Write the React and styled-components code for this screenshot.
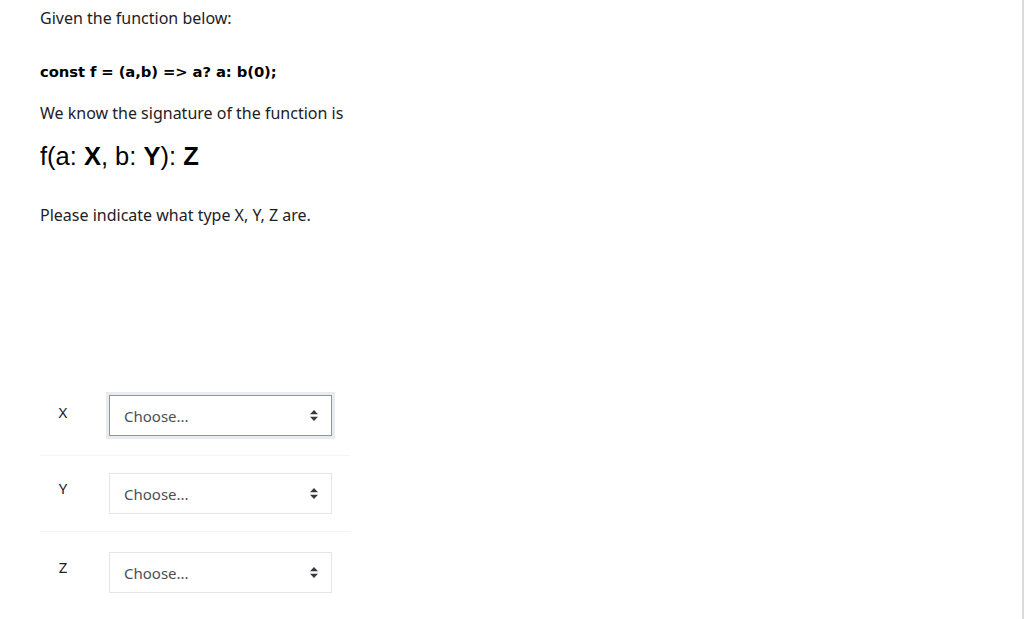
import React from 'react';
import styled, { createGlobalStyle } from 'styled-components';

const GlobalStyle = createGlobalStyle`
  html, body {
    margin: 0;
    padding: 0;
    background: #ffffff;
  }
  body {
    font-family: "Segoe UI", "Noto Sans", "Open Sans", sans-serif;
    color: #1d2125;
  }
`;

const Page = styled.div`
  width: 1024px;
  height: 619px;
  box-sizing: border-box;
  padding: 0 40px;
  border-right: 2px solid #d9dbde;
  overflow: hidden;
`;

const Para = styled.p`
  margin: ${(p) => p.$top || 0}px 0 0;
  font-size: 16px;
  line-height: 22px;
`;

const Code = styled.p`
  margin: 33px 0 0;
  font-family: "DejaVu Sans", Verdana, sans-serif;
  font-weight: bold;
  font-size: 14.8px;
  line-height: 20px;
  letter-spacing: -0.1px;
  color: #000;
  white-space: pre;
`;

const Signature = styled.p`
  margin: 17px 0 0;
  font-family: "Liberation Sans", Arial, sans-serif;
  font-size: 25.5px;
  line-height: 30px;
  color: #000;

  b {
    font-weight: bold;
  }
`;

const Table = styled.div`
  margin-top: 159px;
  width: 310px;
`;

const Row = styled.div`
  display: flex;
  align-items: flex-start;
  padding: ${(p) => p.$pad};
  border-bottom: ${(p) => (p.$last ? 'none' : '1px solid #f3f4f5')};
`;

const Label = styled.div`
  width: 46px;
  margin-right: 23px;
  padding-top: ${(p) => (p.$first ? '7px' : '5px')};
  text-align: center;
  font-size: 15px;
  line-height: 20px;
  color: #1d2125;
`;

const Select = styled.div`
  width: 223px;
  height: 41px;
  box-sizing: border-box;
  display: flex;
  align-items: center;
  justify-content: space-between;
  padding: 0 13px 0 14px;
  border: 1px solid ${(p) => (p.$focus ? '#8f959e' : '#e3e5e8')};
  box-shadow: ${(p) => (p.$focus ? '0 0 0 3px #e9ecef' : 'none')};
  font-size: 15px;
  color: #495057;
  background: #fff;
`;

const Arrows = () => (
  <svg width="8" height="11" viewBox="0 0 8 11">
    <path d="M4 0 L8 4.3 L0 4.3 Z" fill="#343a40" />
    <path d="M4 11 L8 6.7 L0 6.7 Z" fill="#343a40" />
  </svg>
);

const rows = [
  { label: 'X', pad: '10px 0 19px' },
  { label: 'Y', pad: '17px 0 17px' },
  { label: 'Z', pad: '20px 0 0' },
];

export default function App() {
  return (
    <>
      <GlobalStyle />
      <Page>
        <Para $top={7}>Given the function below:</Para>
        <Code>const f = (a,b) =&gt; a? a: b(0);</Code>
        <Para $top={20}>We know the signature of the function is</Para>
        <Signature>
          f(a: <b>X</b>, b: <b>Y</b>): <b>Z</b>
        </Signature>
        <Para $top={33}>Please indicate what type X, Y, Z are.</Para>
        <Table>
          {rows.map((r, i) => (
            <Row key={r.label} $pad={r.pad} $last={i === rows.length - 1}>
              <Label $first={i === 0}>{r.label}</Label>
              <Select $focus={i === 0}>
                <span>Choose...</span>
                <Arrows />
              </Select>
            </Row>
          ))}
        </Table>
      </Page>
    </>
  );
}
